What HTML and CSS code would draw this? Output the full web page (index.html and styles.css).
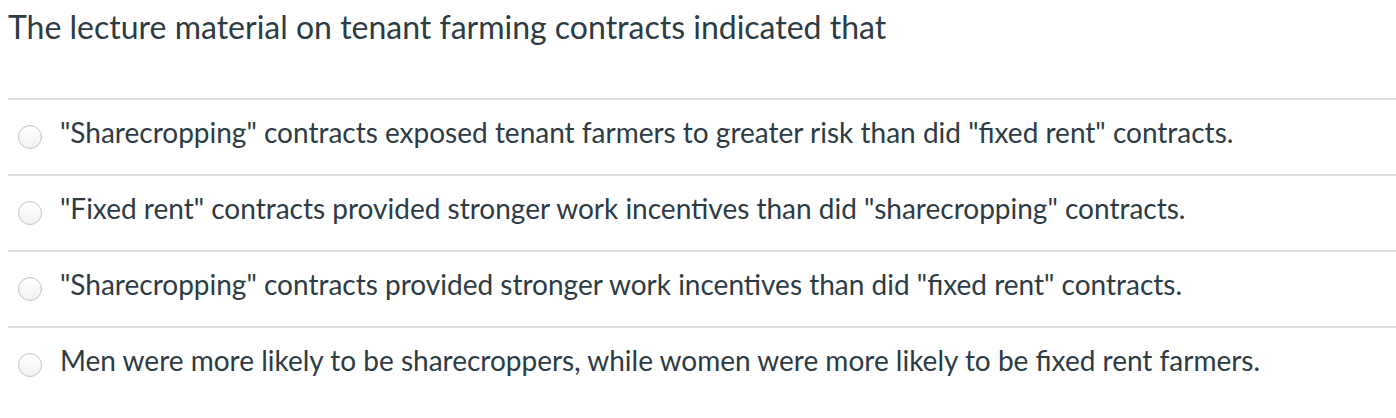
FILE: index.html
```html
<!DOCTYPE html>
<html>
<head>
<meta charset="utf-8">
<link rel="stylesheet" href="styles.css">
</head>
<body>
<div class="question">
  <div class="question-text">The lecture material on tenant farming contracts indicated that</div>
  <div class="answers">
    <label class="answer"><span class="radio"></span><span class="answer-text">"Sharecropping" contracts exposed tenant farmers to greater risk than did "fixed rent" contracts.</span></label>
    <label class="answer"><span class="radio"></span><span class="answer-text">"Fixed rent" contracts provided stronger work incentives than did "sharecropping" contracts.</span></label>
    <label class="answer"><span class="radio"></span><span class="answer-text">"Sharecropping" contracts provided stronger work incentives than did "fixed rent" contracts.</span></label>
    <label class="answer"><span class="radio"></span><span class="answer-text">Men were more likely to be sharecroppers, while women were more likely to be fixed rent farmers.</span></label>
  </div>
</div>
</body>
</html>
```
FILE: styles.css
```css
html, body {
  margin: 0;
  padding: 0;
  background: #fff;
}
body {
  font-family: Lato, "Helvetica Neue", Arial, sans-serif;
  color: #2d3b45;
}
.question {
  padding-left: 8px;
}
.question-text {
  font-size: 32px;
  line-height: 40px;
  padding-top: 7px;
  height: 98px;
  box-sizing: border-box;
}
.answer {
  display: flex;
  align-items: flex-start;
  border-top: 2px solid #dcdcdc;
  height: 76px;
  box-sizing: border-box;
  font-size: 28px;
}
.radio {
  width: 24px;
  height: 24px;
  border-radius: 50%;
  border: 1px solid #c4c4c4;
  box-sizing: border-box;
  margin: 25px 18px 0 10px;
  background: linear-gradient(#fff, #f2f2f2);
  flex: none;
}
.answer-text {
  line-height: 30px;
  padding-top: 17px;
}
```
